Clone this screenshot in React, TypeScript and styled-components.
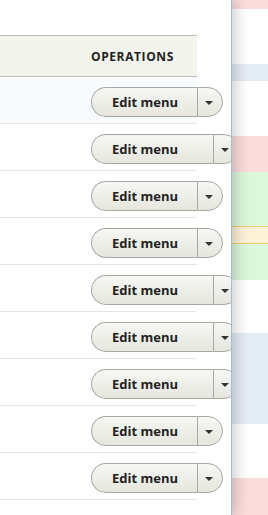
import React from "react";
import styled, { createGlobalStyle } from "styled-components";

const GlobalStyle = createGlobalStyle`
  html, body {
    margin: 0;
    padding: 0;
    background: #ffffff;
  }
  body {
    font-family: "Open Sans", "Noto Sans", sans-serif;
    color: #333333;
  }
`;

const Page = styled.div`
  position: relative;
  width: 268px;
  height: 515px;
  overflow: hidden;
`;

const Backdrop = styled.div`
  display: flex;
  flex-direction: column;
  width: 100%;
`;

type Tone = "pink" | "white" | "blue" | "green" | "yellow";

const toneColors: Record<Tone, string> = {
  pink: "#fbdbdb",
  white: "#ffffff",
  blue: "#e4ecf4",
  green: "#dcf8dc",
  yellow: "#fdf2d8",
};

const Stripe = styled.div<{ $tone: Tone; $h: number }>`
  height: ${(p) => p.$h}px;
  background: ${(p) => toneColors[p.$tone]};
  box-sizing: border-box;
  ${(p) =>
    p.$tone === "yellow" &&
    `border-top: 1px solid #f2cd72; border-bottom: 1px solid #f2cd72;`}
`;

// off-canvas panel lying over the page content
const Panel = styled.div`
  position: absolute;
  top: 0;
  left: 0;
  bottom: 0;
  width: 231px;
  background: #ffffff;
  border-right: 1px solid #a9bccd;
  box-shadow: 3px 0 14px rgba(0, 0, 0, 0.22);
  overflow: hidden;
  padding-top: 35px;
`;

const Table = styled.div`
  width: 197px;
  display: flex;
  flex-direction: column;
`;

const HeaderRow = styled.div`
  height: 40px;
  background: #f3f4ee;
  border-top: 1px solid #bfbfba;
  border-bottom: 1px solid #bfbfba;
  display: flex;
  align-items: center;
  padding-left: 91px;
`;

const HeaderCell = styled.span`
  font-size: 12px;
  font-weight: 700;
  text-transform: uppercase;
  color: #222222;
  letter-spacing: 0.6px;
`;

const Row = styled.div<{ $active?: boolean }>`
  height: 36px;
  border-bottom: 1px solid #e6e4df;
  background: ${(p) => (p.$active ? "#f7fbfe" : "#ffffff")};
  display: flex;
  align-items: flex-start;
  padding-top: 10px;
  padding-left: 91px;
  white-space: nowrap;
`;

const DropButton = styled.div`
  display: flex;
  height: 30px;
  flex-shrink: 0;
`;

const MainAction = styled.a<{ $wide?: boolean }>`
  box-sizing: border-box;
  width: ${(p) => (p.$wide ? 122 : 106)}px;
  height: 30px;
  display: flex;
  align-items: center;
  padding-left: 20px;
  border: 1px solid #a6a6a2;
  border-right: none;
  border-radius: 15px 0 0 15px;
  background: linear-gradient(to bottom, #f7f7f3, #e6e6df);
  font-size: 13px;
  font-weight: 700;
  color: #222222;
  text-decoration: none;
  cursor: pointer;
`;

const Toggle = styled.button`
  box-sizing: border-box;
  width: 26px;
  height: 30px;
  padding: 0 2px 0 0;
  border: 1px solid #a6a6a2;
  border-radius: 0 15px 15px 0;
  background: linear-gradient(to bottom, #f7f7f3, #e6e6df);
  display: flex;
  align-items: center;
  justify-content: center;
  cursor: pointer;
  flex-shrink: 0;
`;

const Arrow = styled.span`
  width: 0;
  height: 0;
  border-left: 4px solid transparent;
  border-right: 4px solid transparent;
  border-top: 4px solid #333333;
  margin-top: 2px;
`;

const rows = [
  { wide: false, active: true },
  { wide: true },
  { wide: false },
  { wide: false },
  { wide: true },
  { wide: true },
  { wide: true },
  { wide: false },
  { wide: false },
];

const stripes: { tone: Tone; h: number }[] = [
  { tone: "pink", h: 9 },
  { tone: "white", h: 55 },
  { tone: "blue", h: 17 },
  { tone: "white", h: 55 },
  { tone: "pink", h: 36 },
  { tone: "green", h: 54 },
  { tone: "yellow", h: 18 },
  { tone: "green", h: 36 },
  { tone: "white", h: 53 },
  { tone: "blue", h: 91 },
  { tone: "white", h: 54 },
  { tone: "pink", h: 37 },
];

export default function App() {
  return (
    <>
      <GlobalStyle />
      <Page>
        <Backdrop>
          {stripes.map((s, i) => (
            <Stripe key={i} $tone={s.tone} $h={s.h} />
          ))}
        </Backdrop>
        <Panel>
          <Table>
            <HeaderRow>
              <HeaderCell>Operations</HeaderCell>
            </HeaderRow>
            {rows.map((r, i) => (
              <Row key={i} $active={r.active}>
                <DropButton>
                  <MainAction $wide={r.wide}>Edit menu</MainAction>
                  <Toggle aria-label="List additional actions">
                    <Arrow />
                  </Toggle>
                </DropButton>
              </Row>
            ))}
          </Table>
        </Panel>
      </Page>
    </>
  );
}
